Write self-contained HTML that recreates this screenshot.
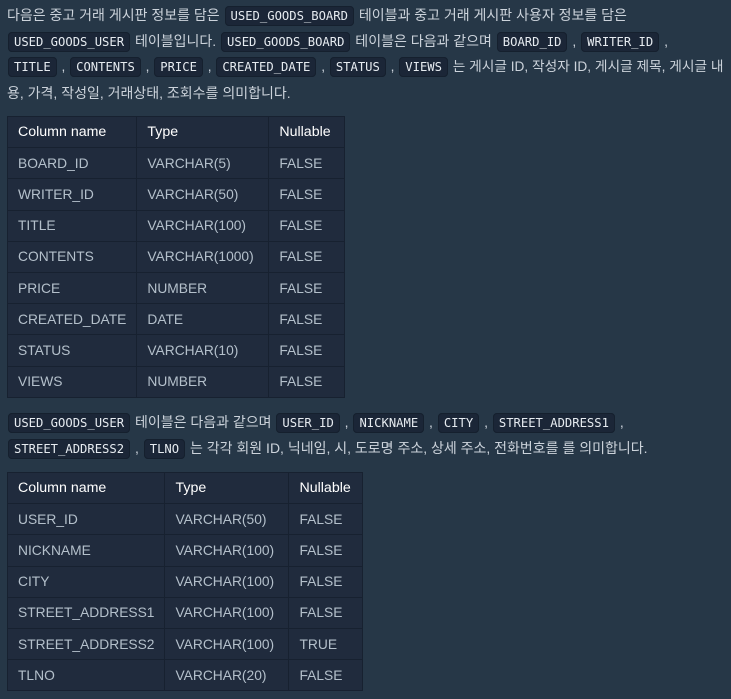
<!DOCTYPE html>
<html><head><meta charset="utf-8"><style>
body{margin:0;background:#263747;width:731px;height:699px;overflow:hidden;font-family:"Liberation Sans","Noto Sans CJK KR",sans-serif;color:#ccd3db;font-size:14px}
.p{position:absolute;left:7px;white-space:nowrap;line-height:26px}
code{font-family:"DejaVu Sans Mono","Liberation Mono",monospace;font-size:12.2px;background:#1b2637;border:1px solid #15202e;border-radius:4px;padding:2px 5px;color:#e6ebf0;margin:0 1px}
table{position:absolute;left:7px;border-collapse:collapse;background:#202b3d;font-size:13.8px}
td,th{border:1px solid #172130;padding:0 10px;height:30.2px;text-align:left;color:#b4c0cb;font-weight:normal;white-space:nowrap}
th{color:#fff;font-size:14.2px}
</style></head><body>
<div class="p" style="top:2px">다음은 중고 거래 게시판 정보를 담은 <code>USED_GOODS_BOARD</code> 테이블과 중고 거래 게시판 사용자 정보를 담은</div>
<div class="p" style="top:28px"><code>USED_GOODS_USER</code> 테이블입니다. <code>USED_GOODS_BOARD</code> 테이블은 다음과 같으며 <code>BOARD_ID</code> , <code>WRITER_ID</code> ,</div>
<div class="p" style="top:54px;font-size:13.7px"><code>TITLE</code> , <code>CONTENTS</code> , <code>PRICE</code> , <code>CREATED_DATE</code> , <code>STATUS</code> , <code>VIEWS</code> 는 게시글 ID, 작성자 ID, 게시글 제목, 게시글 내</div>
<div class="p" style="top:80px">용, 가격, 작성일, 거래상태, 조회수를 의미합니다.</div>
<table style="top:116px;width:338px">
<tr><th style="width:107px">Column name</th><th style="width:111px">Type</th><th>Nullable</th></tr>
<tr><td>BOARD_ID</td><td>VARCHAR(5)</td><td>FALSE</td></tr>
<tr><td>WRITER_ID</td><td>VARCHAR(50)</td><td>FALSE</td></tr>
<tr><td>TITLE</td><td>VARCHAR(100)</td><td>FALSE</td></tr>
<tr><td>CONTENTS</td><td>VARCHAR(1000)</td><td>FALSE</td></tr>
<tr><td>PRICE</td><td>NUMBER</td><td>FALSE</td></tr>
<tr><td>CREATED_DATE</td><td>DATE</td><td>FALSE</td></tr>
<tr><td>STATUS</td><td>VARCHAR(10)</td><td>FALSE</td></tr>
<tr><td>VIEWS</td><td>NUMBER</td><td>FALSE</td></tr>
</table>
<div class="p" style="top:409px"><code>USED_GOODS_USER</code> 테이블은 다음과 같으며 <code>USER_ID</code> , <code>NICKNAME</code> , <code>CITY</code> , <code>STREET_ADDRESS1</code> ,</div>
<div class="p" style="top:435px"><code>STREET_ADDRESS2</code> , <code>TLNO</code> 는 각각 회원 ID, 닉네임, 시, 도로명 주소, 상세 주소, 전화번호를 를 의미합니다.</div>
<table style="top:472px;width:356px">
<tr><th style="width:134px">Column name</th><th style="width:103px">Type</th><th>Nullable</th></tr>
<tr><td>USER_ID</td><td>VARCHAR(50)</td><td>FALSE</td></tr>
<tr><td>NICKNAME</td><td>VARCHAR(100)</td><td>FALSE</td></tr>
<tr><td>CITY</td><td>VARCHAR(100)</td><td>FALSE</td></tr>
<tr><td>STREET_ADDRESS1</td><td>VARCHAR(100)</td><td>FALSE</td></tr>
<tr><td>STREET_ADDRESS2</td><td>VARCHAR(100)</td><td>TRUE</td></tr>
<tr><td>TLNO</td><td>VARCHAR(20)</td><td>FALSE</td></tr>
</table>
</body></html>
